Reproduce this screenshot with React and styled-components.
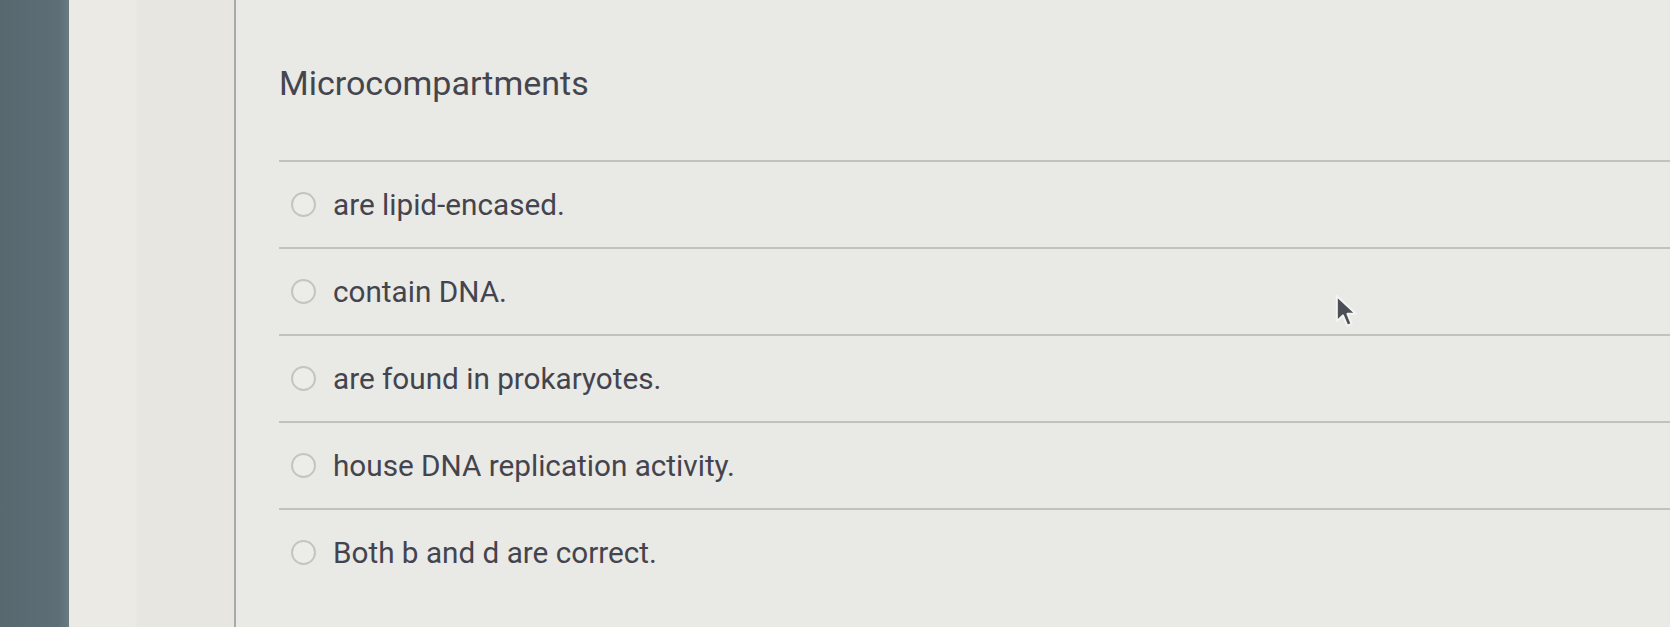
import React from 'react';
import styled, { createGlobalStyle } from 'styled-components';

const GlobalStyle = createGlobalStyle`
  html, body {
    margin: 0;
    padding: 0;
    height: 100%;
    background: #e9e9e5;
  }
  #root {
    height: 100%;
  }
`;

const Page = styled.div`
  position: relative;
  display: flex;
  height: 627px;
  overflow: hidden;
  font-family: Roboto, "Liberation Sans", Arial, sans-serif;
`;

const Rail = styled.div`
  width: 69px;
  flex-shrink: 0;
  background: linear-gradient(90deg, #58686f 0%, #5d6e76 85%, #6a7a81 100%);
`;

const SidePanel = styled.div`
  width: 165px;
  flex-shrink: 0;
  background: linear-gradient(90deg, #ebeae5 0%, #ebeae5 40%, #e7e6e1 42%, #e7e6e1 100%);
  border-right: 2px solid #a9a9a7;
`;

const Content = styled.main`
  flex: 1;
  padding: 63px 0 0 43px;
  background: #e9e9e5;
`;

const Title = styled.h1`
  margin: 0 0 57px;
  font-size: 34px;
  line-height: 40px;
  font-weight: 400;
  color: #45454e;
`;

const OptionList = styled.ul`
  list-style: none;
  margin: 0;
  padding: 0;
`;

const Option = styled.li`
  display: flex;
  align-items: center;
  height: 85px;
  border-top: 2px solid #c1c1be;
  padding-left: 12px;
`;

const Radio = styled.span`
  width: 21px;
  height: 21px;
  flex-shrink: 0;
  border-radius: 50%;
  border: 2px solid #c4c4c1;
  background: #ecece9;
  margin-right: 17px;
`;

const Label = styled.span`
  font-size: 29.7px;
  color: #44444e;
`;

const Cursor = styled.svg`
  position: absolute;
  left: 1333px;
  top: 294px;
  width: 28px;
  height: 38px;
`;

const options = [
  'are lipid-encased.',
  'contain DNA.',
  'are found in prokaryotes.',
  'house DNA replication activity.',
  'Both b and d are correct.',
];

const App = () => {
  return (
    <>
      <GlobalStyle />
      <Page>
        <Rail />
        <SidePanel />
        <Content>
          <Title>Microcompartments</Title>
          <OptionList>
            {options.map((text, index) => (
              <Option key={index}>
                <Radio />
                <Label>{text}</Label>
              </Option>
            ))}
          </OptionList>
        </Content>
        {/* mouse pointer caught in the screenshot */}
        <Cursor viewBox="0 0 20 28">
          <path
            d="M2.5 1.5 L2.5 20 L7 15.8 L10.2 23.3 L13.4 22 L10.3 14.6 L16.5 14.6 Z"
            fill="#4a5055"
            stroke="#f4f4f2"
            strokeWidth="1.5"
            strokeLinejoin="round"
          />
        </Cursor>
      </Page>
    </>
  );
};

export default App;
